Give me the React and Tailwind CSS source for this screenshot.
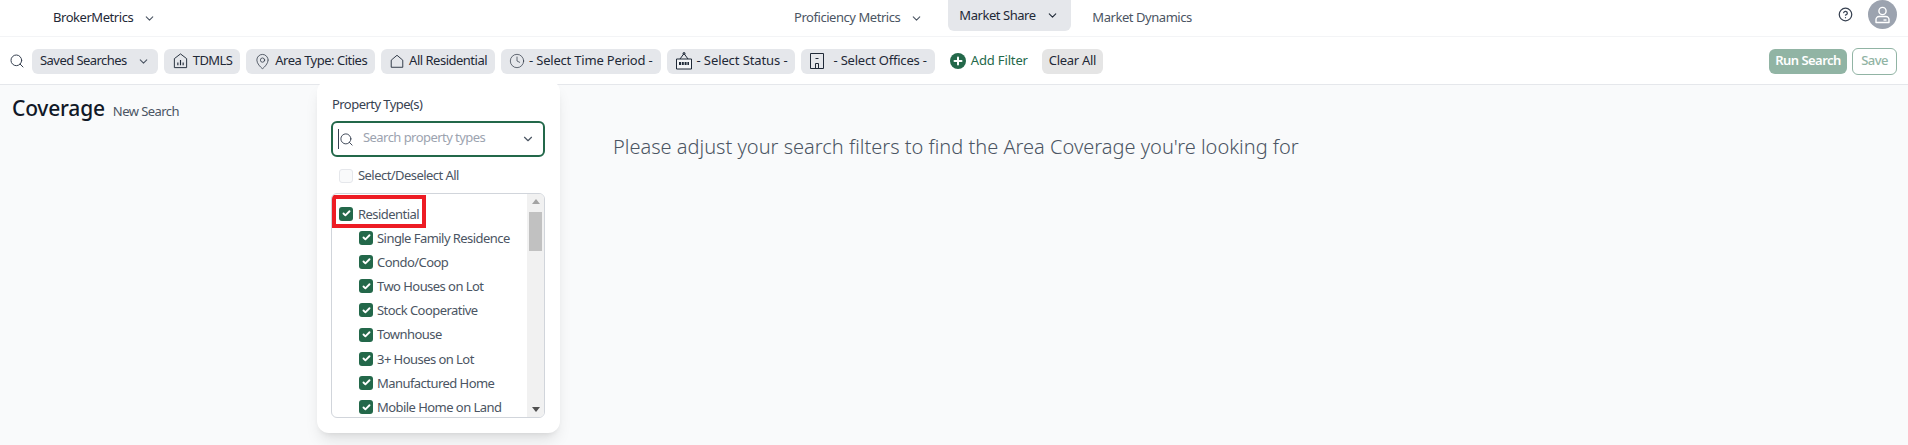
import React from "react";
import { Search, ChevronDown, MapPin, Clock, Check, Plus, CircleHelp } from "lucide-react";

const HouseBars = () => (
  <svg width="17" height="18" viewBox="0 0 18 18" fill="none" stroke="currentColor" strokeWidth="1">
    <path d="M2.5 16h13V6.5L9 1.5 2.5 6.5z" strokeLinejoin="round" />
    <path d="M6.2 13.5v-3M9 13.5v-5.5M11.8 13.5v-3" strokeWidth="1.2" />
  </svg>
);
const HouseOutline = () => (
  <svg width="16" height="17" viewBox="0 0 18 18" fill="none" stroke="currentColor" strokeWidth="1">
    <path d="M2.5 15.5h13V7.5L9 2 2.5 7.5z" strokeLinejoin="round" />
  </svg>
);
const SoldSign = () => (
  <svg width="18" height="20" viewBox="0 0 18 20" fill="none" stroke="currentColor" strokeWidth="1">
    <path d="M1.5 8h15v10h-15z" fill="#f3f4f6" />
    <path d="M5 8l4-5.5L13 8" />
    <circle cx="9" cy="2.5" r="1" />
    <path d="M4 12.5h10" strokeWidth="3" strokeDasharray="2 0.8" />
  </svg>
);
const Office = () => (
  <svg width="20" height="18" viewBox="0 0 20 18" fill="none" stroke="currentColor" strokeWidth="1">
    <path d="M1.5 1.5h13v15h-13z" />
    <path d="M6.5 16.5v-5h3v5M6.5 6.5h3" />
  </svg>
);
const UserIcon = () => (
  <svg width="15" height="18" viewBox="0 0 15 18" fill="none" stroke="white" strokeWidth="1.4">
    <circle cx="7.5" cy="5" r="3.6" />
    <path d="M1 16.5v-3a3 3 0 0 1 3-3h7a3 3 0 0 1 3 3v3z" strokeLinejoin="round" />
    <path d="M8.5 14h3" />
  </svg>
);

function Chip({ icon, track, children }) {
  return (
    <div className="flex h-[25px] items-center gap-[4px] rounded-md bg-[#e5e7eb] px-[8px] text-[13px] text-[#1f2937] whitespace-nowrap">
      {icon}
      <span className={track}>{children}</span>
    </div>
  );
}

function Box() {
  return (
    <span className="flex h-[14px] w-[14px] shrink-0 items-center justify-center rounded-[3px] bg-[#23684a]">
      <Check size={9} strokeWidth={5} color="white" />
    </span>
  );
}

const children = [
  "Single Family Residence",
  "Condo/Coop",
  "Two Houses on Lot",
  "Stock Cooperative",
  "Townhouse",
  "3+ Houses on Lot",
  "Manufactured Home",
  "Mobile Home on Land",
];

export default function App() {
  return (
    <div className="relative flex h-[445px] w-full flex-col overflow-hidden bg-[#f9fafb] font-['Noto_Sans',sans-serif] text-[#1f2937]">
      <header className="flex h-[37px] shrink-0 items-start border-b border-[#f3f4f6] bg-white tracking-[-0.45px]">
        <div className="flex h-[36px] w-[794px] shrink-0 items-center gap-[10px] pl-[53px] text-[13px]">
          <span className="text-[#1f2937]">BrokerMetrics</span>
          <ChevronDown size={13} className="text-[#4b5563]" />
        </div>
        <div className="flex h-[36px] items-center gap-[10px] text-[13px] text-[#4b5563]">
          <span>Proficiency Metrics</span>
          <ChevronDown size={13} />
        </div>
        <div className="ml-[25px] flex h-[31px] w-[123px] items-center gap-[10px] rounded-b-md bg-[#e5e7eb] pl-[11px] text-[13px] text-[#1f2937]">
          <span>Market Share</span>
          <ChevronDown size={13} />
        </div>
        <div className="ml-[21px] flex h-[36px] items-center text-[13px] text-[#4b5563]">Market Dynamics</div>
        <div className="ml-auto flex items-center gap-[15px] pr-[11px]">
          <CircleHelp size={15} className="text-[#374151]" />
          <div className="flex h-[29px] w-[29px] items-center justify-center rounded-full bg-[#9ca3af]">
            <UserIcon />
          </div>
        </div>
      </header>

      <div className="flex h-[48px] shrink-0 items-center gap-[6px] border-b border-[#e5e7eb] bg-white pl-[9px] pr-[11px] pt-[1px]">
        <Search size={16} strokeWidth={1.5} className="mr-[1px] text-[#374151]" />
        <Chip track="tracking-[-0.55px]">
          <span className="flex items-center gap-[10px]">
            Saved Searches <ChevronDown size={13} className="text-[#4b5563]" />
          </span>
        </Chip>
        <Chip icon={<HouseBars />} track="tracking-[-0.6px]">TDMLS</Chip>
        <Chip icon={<MapPin size={17} strokeWidth={1} />} track="tracking-[-0.5px]">Area Type: Cities</Chip>
        <Chip icon={<HouseOutline />} track="tracking-[-0.5px]">All Residential</Chip>
        <Chip icon={<Clock size={16} strokeWidth={1} />} track="tracking-[-0.2px]">- Select Time Period -</Chip>
        <Chip icon={<SoldSign />} track="tracking-[-0.1px]">- Select Status -</Chip>
        <Chip icon={<Office />} track="tracking-[-0.2px]">- Select Offices -</Chip>
        <div className="ml-[9px] flex items-center gap-[5px] text-[13px] tracking-[-0.15px] text-[#23684a]">
          <span className="flex h-[16px] w-[16px] items-center justify-center rounded-full bg-[#23684a]">
            <Plus size={12} strokeWidth={4} color="white" />
          </span>
          Add Filter
        </div>
        <div className="ml-[8px] flex h-[25px] items-center rounded-md bg-[#e5e5e5] px-[7px] text-[13px] tracking-[-0.3px]">Clear All</div>
        <div className="ml-auto flex h-[25px] w-[78px] items-center justify-center rounded-md bg-[#91b4a4] text-[13px] font-semibold tracking-[-0.55px] text-white">
          Run Search
        </div>
        <div className="-ml-[1px] flex h-[27px] w-[45px] items-center justify-center rounded-md border border-[#91b4a4] bg-white text-[13px] font-medium tracking-[-0.55px] text-[#91b4a4]">
          Save
        </div>
      </div>

      <main className="relative flex-1">
        <div className="flex items-baseline gap-[8px] pl-[12px] pt-[8px]">
          <h1 className="text-[21px] font-medium tracking-[-0.2px] text-[#111827]">Coverage</h1>
          <span className="text-[13px] tracking-[-0.55px] text-[#4b5563]">New Search</span>
        </div>
        <p className="absolute left-[613px] top-[47px] text-[20px] font-light text-[#4b5563]">
          Please adjust your search filters to find the Area Coverage you're looking for
        </p>
      </main>

      <div className="absolute left-[317px] top-[80px] flex h-[353px] w-[243px] flex-col rounded-xl bg-white px-[14px] pt-[14px] text-[13px] tracking-[-0.55px] shadow-lg">
        <div className="pl-[1px] leading-[20px] text-[#374151]">Property Type(s)</div>
        <div className="mt-[7px] flex h-[36px] w-[214px] items-center rounded-md border-2 border-[#23684a] pl-[5px] pr-[8px]">
          <span className="h-[20px] w-px bg-[#374151]" />
          <Search size={15} strokeWidth={1.5} className="text-[#374151]" />
          <span className="ml-[9px] flex-1 pb-[3px] text-[#9ca3af]">Search property types</span>
          <ChevronDown size={14} className="text-[#4b5563]" />
        </div>
        <div className="mt-[9px] flex items-center gap-[5px] pl-[8px] pb-[1px] text-[#4b5563]">
          <span className="h-[14px] w-[14px] rounded-[3px] border border-[#e5e7eb] bg-[#f9fafb]" />
          Select/Deselect All
        </div>
        <div className="relative mt-[6px] flex h-[225px] w-[214px] overflow-hidden rounded-md border border-[#d1d5db]">
          <div className="flex-1 pt-[8px] leading-[24.2px] text-[#4b5563]">
            <div className="flex h-[24.2px] items-center gap-[5px] pl-[7px]">
              <Box />
              Residential
            </div>
            {children.map((c) => (
              <div key={c} className="flex h-[24.2px] items-center gap-[4px] pl-[27px] whitespace-nowrap">
                <Box />
                {c}
              </div>
            ))}
          </div>
          <div className="flex w-[17px] shrink-0 flex-col items-center bg-[#f1f1f1]">
            <span className="mt-[5px] h-0 w-0 border-x-[4px] border-b-[5px] border-x-transparent border-b-[#a3a3a3]" />
            <span className="mt-[8px] h-[39px] w-[13px] bg-[#c1c1c1]" />
            <span className="mt-auto mb-[5px] h-0 w-0 border-x-[4px] border-t-[5px] border-x-transparent border-t-[#505050]" />
          </div>
          <div className="absolute left-0 top-[1px] h-[33px] w-[94px] border-[4px] border-[#ed1c24]" />
        </div>
      </div>
    </div>
  );
}
